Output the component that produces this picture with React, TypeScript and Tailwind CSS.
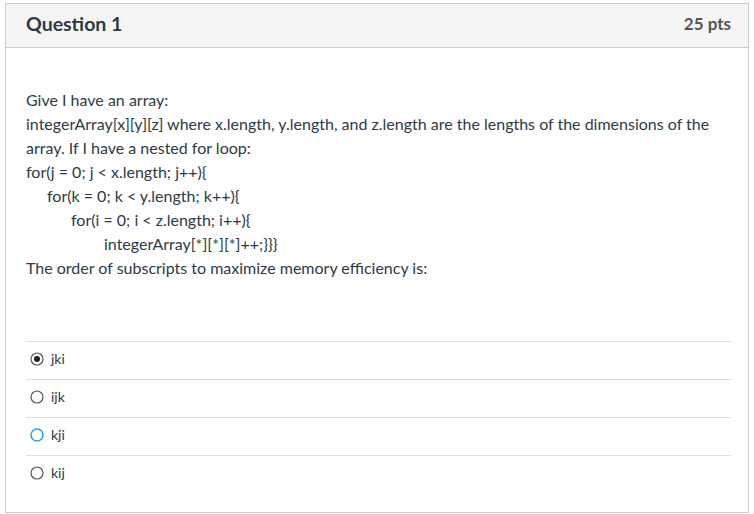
import React from 'react';

const answers = [
  { label: 'jki', state: 'checked' },
  { label: 'ijk', state: 'none' },
  { label: 'kji', state: 'focus' },
  { label: 'kij', state: 'none' },
];

function Radio({ state }: { state: string }) {
  const stroke = state === 'focus' ? '#2d9fd9' : '#555';
  return (
    <svg width="14" height="14" viewBox="0 0 14 14" className="shrink-0">
      <circle cx="7" cy="7" r="6" fill="white" stroke={stroke} strokeWidth={state === 'focus' ? 1.5 : 1.2} />
      {state === 'checked' && <circle cx="7" cy="7" r="3" fill="#222" />}
    </svg>
  );
}

export default function App() {
  return (
    <div className="bg-white w-[754px] h-[514px] pt-[3px] pl-[5px]" style={{ fontFamily: 'Lato, "Open Sans", sans-serif' }}>
      <div className="w-[744px] h-[510px] border border-[#c7cdd1] flex flex-col">
        <div className="h-[44px] bg-[#f5f5f5] border-b border-[#c7cdd1] flex items-center justify-between pl-[20px] pr-[17px] pb-[4px]">
          <span className="text-[19.5px] font-bold text-[#2d3b45]">Question 1</span>
          <span className="text-[17px] font-bold text-[#555]">25 pts</span>
        </div>
        <div className="pt-[40px] pl-[20px] pr-[17px] text-[16px] leading-[24px] text-[#2d3b45]">
          <p>Give I have an array:</p>
          <p>integerArray[x][y][z] where x.length, y.length, and z.length are the lengths of the dimensions of the array. If I have a nested for loop:</p>
          <p>for(j = 0; j &lt; x.length; j++){'{'}</p>
          <p className="pl-[21px]">for(k = 0; k &lt; y.length; k++){'{'}</p>
          <p className="pl-[45px]">for(i = 0; i &lt; z.length; i++){'{'}</p>
          <p className="pl-[78px]">integerArray[*][*][*]++;{'}}}'}</p>
          <p>The order of subscripts to maximize memory efficiency is:</p>
        </div>
        <div className="mt-[61px] ml-[20px] mr-[17px]">
          {answers.map((a) => (
            <div key={a.label} className="h-[38px] border-t border-[#dcdfe2] flex items-center gap-[7px] pl-[4px] pb-[4px]">
              <Radio state={a.state} />
              <span className="text-[14px] text-[#2d3b45]">{a.label}</span>
            </div>
          ))}
        </div>
      </div>
    </div>
  );
}
